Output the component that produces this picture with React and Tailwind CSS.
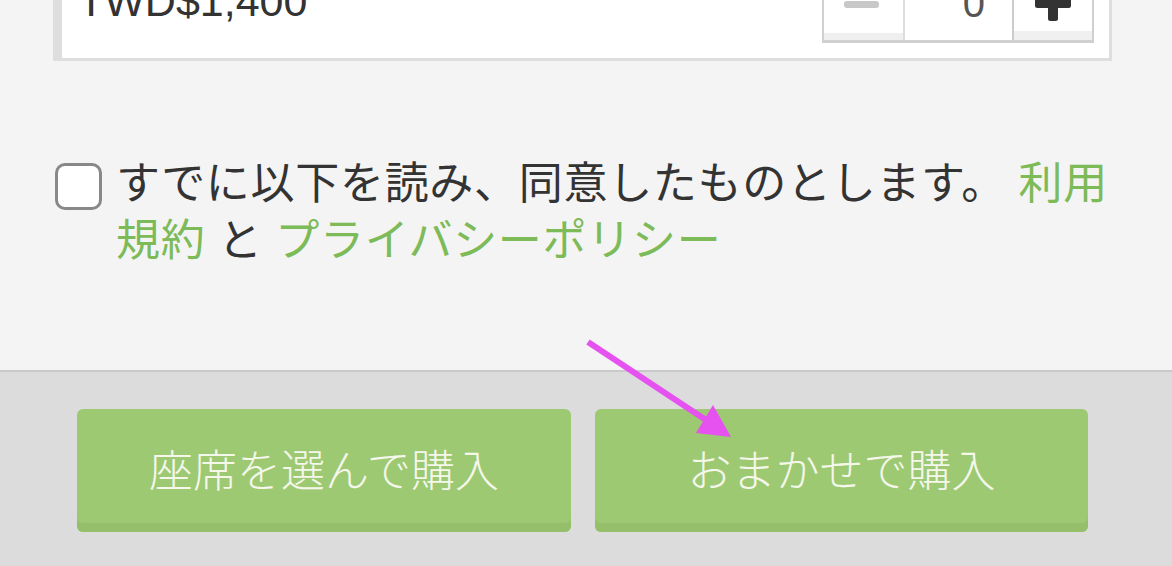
import React from "react";

const jp = { fontFamily: '"Noto Sans CJK JP", "Noto Sans", sans-serif' };
const latin = { fontFamily: '"Liberation Sans", Arial, sans-serif' };

const Stepper = ({ value }) => (
  <div className="flex h-[82px] border-2 border-b-[3px] border-[#d0d0d0] mb-[15px] mr-[15px]">
    <button className="w-[81px] bg-white shadow-[inset_0_-7px_0_#efefef] border-r-2 border-[#dddddd] flex items-center justify-center">
      <span className="block w-[35px] h-[7px] rounded-[3px] bg-[#c8c8c8] mt-[6px] mr-[4px]" />
    </button>
    <div
      className="w-[107px] bg-white flex items-end justify-end pr-[27px] pb-[17px] text-[40px] leading-none text-[#555555]"
      style={latin}
    >
      {value}
    </div>
    <button className="w-[80px] bg-white shadow-[inset_0_-9px_0_#f0f0f0] border-l-2 border-[#cccccc] flex items-center justify-center">
      <svg width="36" height="36" viewBox="0 0 36 36" className="mt-[2px]">
        <rect x="0" y="13" width="36" height="10" rx="2.5" fill="#333333" />
        <rect x="13" y="0" width="10" height="36" rx="2.5" fill="#333333" />
      </svg>
    </button>
  </div>
);

const BuyButton = ({ label }) => (
  <button
    className="w-full h-[123px] rounded-[6px] bg-[#9dc973] shadow-[inset_0_-9px_0_#95bf6b] flex items-center justify-center pb-[5px] text-[44px] font-light text-[#f4f7ea]"
    style={jp}
  >
    {label}
  </button>
);

export default function App() {
  return (
    <div className="relative w-[1172px] h-[566px] overflow-hidden bg-[#f4f4f4]">
      <div className="h-[370px] flex flex-col">
        {/* ticket card, top cut off */}
        <div className="mt-[-60px] ml-[53px] w-[1059px] h-[121px] shrink-0 bg-white border-l-[9px] border-r-[3px] border-b-[3px] border-[#dedede] flex items-end justify-between">
          <p
            className="pl-[16px] mb-[35px] text-[43px] leading-none text-[#333333]"
            style={latin}
          >
            TWD$1,400
          </p>
          <Stepper value="0" />
        </div>

        {/* agreement */}
        <label className="mt-[91px] pl-[55px] flex items-start gap-[14px]">
          <span className="mt-[11px] w-[47px] h-[47px] shrink-0 rounded-[10px] border-[3px] border-[#888888] bg-white" />
          <span
            className="w-[1000px] text-[44px] leading-[57px] tracking-[0.7px] [word-spacing:2px] text-[#333333]"
            style={jp}
          >
            すでに以下を読み、同意したものとします。{" "}
            <a className="text-[#7dba58]">利用規約</a> と{" "}
            <a className="text-[#7dba58]">プライバシーポリシー</a>
          </span>
        </label>
      </div>

      {/* bottom action bar */}
      <div className="h-[196px] border-t-2 border-[#c9c9c9] bg-[#dcdcdc] pt-[37px] pl-[77px] flex gap-[24px]">
        <div className="w-[494px]">
          <BuyButton label="座席を選んで購入" />
        </div>
        <div className="w-[493px]">
          <BuyButton label="おまかせで購入" />
        </div>
      </div>

      {/* annotation arrow */}
      <svg
        className="absolute left-0 top-0 pointer-events-none"
        width="1172"
        height="566"
        viewBox="0 0 1172 566"
      >
        <line x1="588" y1="342" x2="712" y2="424" stroke="#e652f0" strokeWidth="6" />
        <polygon points="731,437 713,405 696,433" fill="#e652f0" />
      </svg>
    </div>
  );
}
